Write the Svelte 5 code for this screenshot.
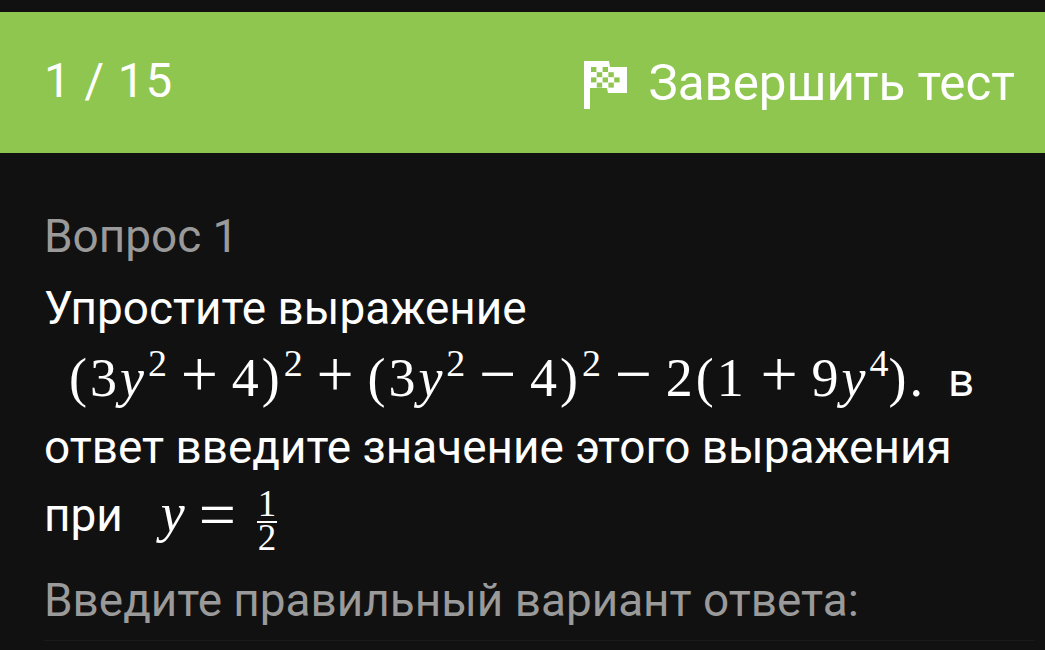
<script>
  const flag = [[0,0],[2,0],[1,1],[3,1],[0,2],[2,2],[4,2],[3,3],[1,3]];
</script>

<div class="page">
  <header class="bar">
    <span class="count">1 / 15</span>
    <span class="finish">
      <svg class="flag" viewBox="0 0 43 48" width="43" height="48" aria-hidden="true">
        <path fill="#fff" d="M0 0H25L26 6H43V32H24L23 27H6V48H0Z"/>
        {#each flag as [c, r]}
          <rect fill="#8fc64f" x={7 + c * 5.8} y={6 + r * 5.2} width="5.4" height="5"/>
        {/each}
      </svg>
      <span>Завершить тест</span>
    </span>
  </header>

  <main class="body">
    <div class="label q">Вопрос 1</div>
    <div class="text">
      <div class="line">Упростите выражение</div>
      <div class="line formula">
        <span class="math">(3<i>y</i><sup>2</sup><b>+</b>4)<sup>2</sup><b>+</b>(3<i>y</i><sup>2</sup><b>−</b>4)<sup>2</sup><b>−</b>2(1<b>+</b>9<i>y</i><sup>4</sup>).</span>
        <span class="tail">в</span>
      </div>
      <div class="line">ответ введите значение этого выражения</div>
      <div class="line last">
        <span>при</span>
        <span class="math small"><i>y</i><b>=</b><span class="frac"><span class="num">1</span><span class="den">2</span></span></span>
      </div>
    </div>
    <div class="label hint">Введите правильный вариант ответа:</div>
    <div class="field"></div>
  </main>
</div>

<style>
  :global(body) {
    margin: 0;
    background: #111111;
  }
  .page {
    height: 650px;
    overflow: hidden;
    background: #111111;
    padding-top: 12px;
    box-sizing: border-box;
    font-family: Roboto, "Noto Sans", sans-serif;
    color: #fff;
  }
  .bar {
    height: 141px;
    background: #8fc64f;
    display: flex;
    align-items: center;
    justify-content: space-between;
    padding: 0 30px 0 44px;
    font-size: 47.5px;
    box-sizing: border-box;
  }
  .count {
    letter-spacing: 1px;
    position: relative;
    top: -2px;
  }
  .finish {
    display: flex;
    align-items: center;
    gap: 21px;
    font-size: 49.3px;
  }
  .flag {
    flex: none;
    margin-top: 4px;
  }
  .body {
    padding: 57px 0 0 44px;
  }
  .label {
    font-size: 45.9px;
    line-height: 52px;
    color: #9a9a9a;
  }
  .text {
    margin-top: 11px;
    font-size: 45.9px;
  }
  .line {
    height: 70px;
    line-height: 70px;
    white-space: nowrap;
  }
  .formula {
    display: flex;
    align-items: baseline;
    height: 69px;
    padding-left: 25px;
  }
  .math {
    font-family: "Liberation Serif", "DejaVu Serif", serif;
    font-size: 54px;
    line-height: 70px;
    letter-spacing: 3px;
  }
  .math b {
    font-weight: 400;
    font-size: 66px;
    line-height: 0;
    letter-spacing: 0;
    margin: 0 13.75px;
  }
  .math sup {
    font-size: 38px;
    line-height: 0;
    vertical-align: 20px;
    letter-spacing: 0;
    margin-left: 1px;
  }
  .tail {
    margin-left: 22px;
  }
  .last {
    display: flex;
    align-items: baseline;
    gap: 38px;
    margin-top: -4px;
  }
  .small {
    display: flex;
    align-items: baseline;
  }
  .small b {
    margin: 0 21px 0 11px;
    position: relative;
    top: 6px;
  }
  .frac {
    display: inline-flex;
    flex-direction: column;
    align-items: center;
    font-size: 37px;
    line-height: 29px;
    letter-spacing: 0;
    position: relative;
    top: -15px;
  }
  .num {
    border-bottom: 2px solid #fff;
    padding: 0 0 3px;
    width: 20px;
    text-align: center;
  }
  .hint {
    margin-top: 26px;
  }
  .field {
    margin: 14px 10px 0 0;
    height: 40px;
    border-top: 1px solid #1b1b1b;
  }
</style>
